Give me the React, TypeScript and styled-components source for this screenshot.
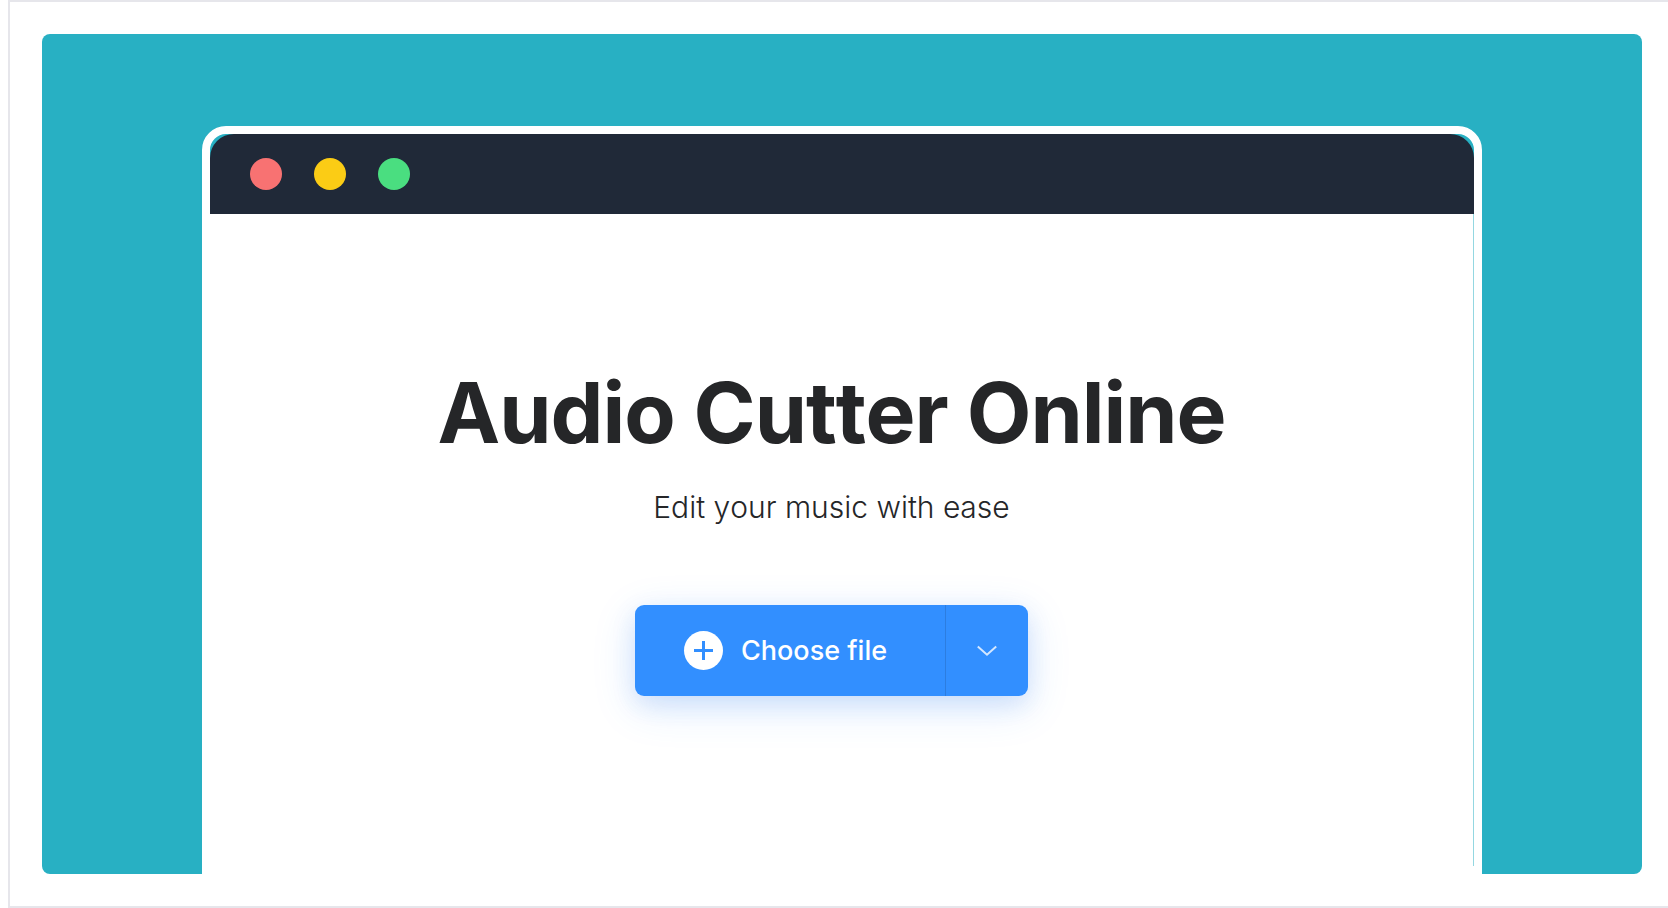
import React from "react";
import styled, { createGlobalStyle } from "styled-components";

const GlobalStyle = createGlobalStyle`
  *, *::before, *::after {
    box-sizing: border-box;
  }
  body {
    margin: 0;
    background: #ffffff;
    color: #252628;
    font-family: Inter, "Liberation Sans", sans-serif;
    font-kerning: none;
    -webkit-font-smoothing: antialiased;
  }
`;

const Frame = styled.div`
  display: flex;
  min-height: 100vh;
  margin-left: 8px;
  padding: 32px 26px 32px 32px;
  border: 2px solid #e6e6eb;
  border-right: 0;
`;

const Stage = styled.main`
  flex: 1;
  display: flex;
  padding: 92px 10% 0;
  border-radius: 8px;
  background: #28b0c3;
  overflow: hidden;
`;

const BrowserWindow = styled.section`
  flex: 1;
  display: flex;
  flex-direction: column;
  border: 8px solid #ffffff;
  border-radius: 24px 24px 0 0;
`;

const TitleBar = styled.header`
  display: flex;
  align-items: center;
  gap: 32px;
  height: 80px;
  padding: 0 40px;
  border-radius: 24px 24px 0 0;
  background: #202938;
`;

const Dot = styled.span<{ $color: string }>`
  width: 32px;
  height: 32px;
  border-radius: 50%;
  background: ${({ $color }) => $color};
`;

const Content = styled.div`
  flex: 1;
  display: flex;
  flex-direction: column;
  align-items: center;
  padding: 149px 20px 56px 0;
  border-right: 1px solid #94d7e1;
  background: #ffffff;
`;

const Title = styled.h1`
  margin: 0;
  font-size: 84px;
  font-weight: 700;
  line-height: 100px;
  letter-spacing: -1px;
`;

const Subtitle = styled.p`
  margin: 24px 0 0;
  font-size: 30px;
  font-weight: 300;
  line-height: 40px;
`;

const SplitButton = styled.div`
  display: flex;
  height: 91px;
  margin-top: 78px;
  border-radius: 9px;
  background: #328fff;
  box-shadow: 0 11px 44px rgba(50, 143, 255, 0.16), 0 8px 24px rgba(36, 100, 220, 0.14);
`;

const SegmentButton = styled.button`
  display: flex;
  align-items: center;
  border: 0;
  background: transparent;
  color: #ffffff;
  font-family: inherit;
  font-size: 27px;
  font-weight: 500;
  line-height: 36px;
  cursor: pointer;
`;

const ChooseButton = styled(SegmentButton)`
  gap: 18px;
  width: 310px;
  padding: 0 0 0 48px;
`;

const MenuButton = styled(SegmentButton)`
  justify-content: center;
  width: 83px;
  padding: 0;
  border-left: 1px solid #2c7de0;
`;

const PlusIcon = () => (
  <svg width="40" height="40" viewBox="0 0 40 40" aria-hidden="true">
    <circle cx="20.5" cy="19.5" r="19.5" fill="#ffffff" />
    <path d="M20.5 10v19M11 19.5h19" stroke="#328fff" strokeWidth="3" />
  </svg>
);

const ChevronIcon = () => (
  <svg width="20" height="12" viewBox="0 0 20 12" fill="none" aria-hidden="true">
    <path d="M0.8 1.5 10 9.7 19.2 1.5" stroke="#d4e7ff" strokeWidth="2" />
  </svg>
);

const dotColors = ["#f87272", "#fbcc15", "#4ade80"];

export default function App() {
  return (
    <>
      <GlobalStyle />
      <Frame>
        <Stage>
          <BrowserWindow>
            <TitleBar>
              {dotColors.map((color) => (
                <Dot key={color} $color={color} />
              ))}
            </TitleBar>
            <Content>
              <Title>Audio Cutter Online</Title>
              <Subtitle>Edit your music with ease</Subtitle>
              <SplitButton>
                <ChooseButton type="button">
                  <PlusIcon />
                  Choose file
                </ChooseButton>
                <MenuButton type="button" aria-label="More sources">
                  <ChevronIcon />
                </MenuButton>
              </SplitButton>
            </Content>
          </BrowserWindow>
        </Stage>
      </Frame>
    </>
  );
}
